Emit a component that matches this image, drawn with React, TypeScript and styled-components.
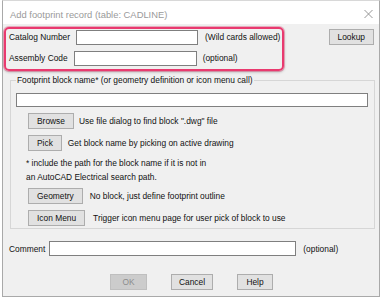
import React from 'react';
import styled, { createGlobalStyle } from 'styled-components';

// ダイアログのスクリーンショット再現
const GlobalStyle = createGlobalStyle`
  html, body {
    margin: 0;
    padding: 0;
    background: #ffffff;
  }
  body {
    font-family: "Liberation Sans", Arial, sans-serif;
    font-size: 8.4px;
    color: #111;
  }
`;

const Window = styled.div`
  box-sizing: border-box;
  margin-left: 2px;
  width: 378px;
  height: 297px;
  border: 1px solid #a9a9a9;
  border-top-color: #d8d8d8;
  background: #f0f0f0;
  display: flex;
  flex-direction: column;
`;

const TitleBar = styled.div`
  height: 23px;
  background: #ffffff;
  display: flex;
  align-items: center;
  padding: 0 6px 0 7px;
`;

const Title = styled.span`
  flex: 1;
  font-size: 9.4px;
  color: #9a9a9a;
  padding-top: 3px;
`;

const Close = styled.svg`
  width: 9px;
  height: 8px;
  margin-top: 2px;
`;

const TopSection = styled.div`
  position: relative;
  padding: 5px 5px 0 6px;
  display: flex;
  flex-direction: column;
  gap: 5px;
`;

const Highlight = styled.div`
  position: absolute;
  left: 1px;
  top: 3px;
  width: 280px;
  height: 44px;
  box-sizing: border-box;
  border: 2px solid #e93a6f;
  border-radius: 5px;
  box-shadow: 0 0 0 1px rgba(233, 58, 111, 0.35), 0 1px 3px rgba(0, 0, 0, 0.3);
  pointer-events: none;
`;

const Row = styled.div<{ $h?: number }>`
  display: flex;
  align-items: center;
  height: ${(p) => p.$h ?? 16}px;
`;

const Label = styled.span`
  white-space: nowrap;
`;

const TextBox = styled.div<{ $w?: number; $h?: number; $ml?: number }>`
  box-sizing: border-box;
  width: ${(p) => (p.$w ? `${p.$w}px` : '100%')};
  height: ${(p) => p.$h ?? 15}px;
  margin-left: ${(p) => p.$ml ?? 0}px;
  background: #ffffff;
  border: 1px solid #7f7f7f;
  flex-shrink: 0;
`;

const Note = styled.span<{ $ml?: number }>`
  margin-left: ${(p) => p.$ml ?? 6}px;
  white-space: nowrap;
`;

const Button = styled.button<{ $w?: number; $ml?: string }>`
  box-sizing: border-box;
  height: 16px;
  ${(p) => (p.$w ? `width: ${p.$w}px;` : 'padding: 0 8px;')}
  margin-left: ${(p) => p.$ml ?? '0'};
  font-family: inherit;
  font-size: 8.4px;
  color: #111;
  background: #e1e1e1;
  border: 1px solid #adadad;
  border-radius: 0;
  flex-shrink: 0;
  &:disabled {
    background: #cccccc;
    border-color: #bfbfbf;
    color: #8d8d8d;
  }
`;

const Group = styled.fieldset`
  margin: 9px 4px 0 7px;
  padding: 0 6px 2px 5px;
  border: 1px solid #d6d6d6;
  display: flex;
  flex-direction: column;
`;

const Legend = styled.legend`
  padding: 0 1px;
  line-height: 10px;
`;

const GroupInner = styled.div`
  display: flex;
  flex-direction: column;
  gap: 6px;
  padding-top: 8px;
`;

const ActionRow = styled(Row)`
  padding-left: 12px;
`;

const Hint = styled.div`
  padding-left: 10px;
  line-height: 13.5px;
  margin: 0 0 -2px;
`;

const CommentRow = styled(Row)`
  margin-top: 12px;
  padding-left: 6px;
`;

const Footer = styled.div`
  display: flex;
  gap: 24px;
  margin-top: 18px;
  padding-left: 107px;
`;

export default function App() {
  return (
    <>
      <GlobalStyle />
      <Window>
        <TitleBar>
          <Title>Add footprint record (table: CADLINE)</Title>
          <Close viewBox="0 0 9 8">
            <path d="M0.5 0 L8.5 8 M8.5 0 L0.5 8" stroke="#8a8a8a" strokeWidth="0.9" fill="none" />
          </Close>
        </TitleBar>

        <TopSection>
          <Row>
            <Label>Catalog Number</Label>
            <TextBox $w={122} $ml={6} />
            <Note $ml={7}>(Wild cards allowed)</Note>
            <Button $ml="auto">Lookup</Button>
          </Row>
          <Row>
            <Label>Assembly Code</Label>
            <TextBox $w={123} $ml={6} />
            <Note>(optional)</Note>
          </Row>
          <Highlight />
        </TopSection>

        <Group>
          <Legend>Footprint block name* (or geometry definition or icon menu call)</Legend>
          <GroupInner>
            <TextBox $h={14} />
            <ActionRow>
              <Button>Browse</Button>
              <Note $ml={5}>Use file dialog to find block ".dwg" file</Note>
            </ActionRow>
            <ActionRow>
              <Button>Pick</Button>
              <Note>Get block name by picking on active drawing</Note>
            </ActionRow>
            <Hint>
              * include the path for the block name if it is not in
              <br />
              an AutoCAD Electrical search path.
            </Hint>
            <ActionRow>
              <Button>Geometry</Button>
              <Note $ml={7}>No block, just define footprint outline</Note>
            </ActionRow>
            <ActionRow>
              <Button>Icon Menu</Button>
              <Note $ml={8}>Trigger icon menu page for user pick of block to use</Note>
            </ActionRow>
          </GroupInner>
        </Group>

        <CommentRow $h={15}>
          <Label>Comment</Label>
          <TextBox $w={247} $ml={4} />
          <Note $ml={7}>(optional)</Note>
        </CommentRow>

        <Footer>
          <Button $w={37} disabled>
            OK
          </Button>
          <Button $w={42}>Cancel</Button>
          <Button $w={36}>Help</Button>
        </Footer>
      </Window>
    </>
  );
}
